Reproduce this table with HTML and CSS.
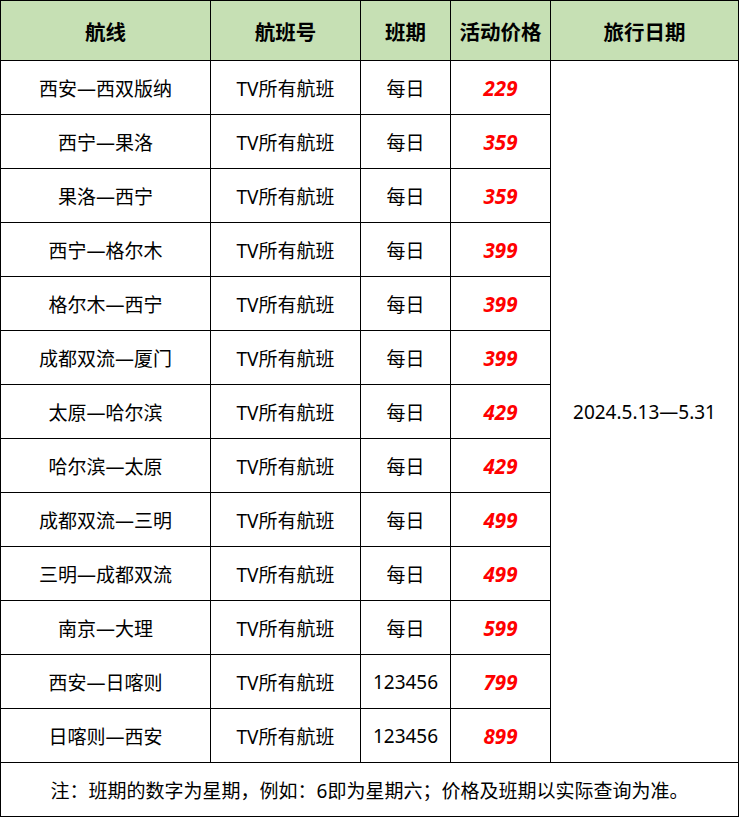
FILE: index.html
```html
<!DOCTYPE html>
<html lang="zh-CN">
<head>
<meta charset="utf-8">
<title>航线活动价格</title>
<link rel="stylesheet" href="styles.css">
</head>
<body>
<table class="fare-table">
  <colgroup>
    <col class="c-route">
    <col class="c-flight">
    <col class="c-sched">
    <col class="c-price">
    <col class="c-date">
  </colgroup>
  <thead>
    <tr class="head-row">
      <th>航线</th>
      <th>航班号</th>
      <th>班期</th>
      <th>活动价格</th>
      <th>旅行日期</th>
    </tr>
  </thead>
  <tbody>
    <tr><td>西安—西双版纳</td><td>TV所有航班</td><td>每日</td><td class="price">229</td><td class="date" rowspan="13">2024.5.13—5.31</td></tr>
    <tr><td>西宁—果洛</td><td>TV所有航班</td><td>每日</td><td class="price">359</td></tr>
    <tr><td>果洛—西宁</td><td>TV所有航班</td><td>每日</td><td class="price">359</td></tr>
    <tr><td>西宁—格尔木</td><td>TV所有航班</td><td>每日</td><td class="price">399</td></tr>
    <tr><td>格尔木—西宁</td><td>TV所有航班</td><td>每日</td><td class="price">399</td></tr>
    <tr><td>成都双流—厦门</td><td>TV所有航班</td><td>每日</td><td class="price">399</td></tr>
    <tr><td>太原—哈尔滨</td><td>TV所有航班</td><td>每日</td><td class="price">429</td></tr>
    <tr><td>哈尔滨—太原</td><td>TV所有航班</td><td>每日</td><td class="price">429</td></tr>
    <tr><td>成都双流—三明</td><td>TV所有航班</td><td>每日</td><td class="price">499</td></tr>
    <tr><td>三明—成都双流</td><td>TV所有航班</td><td>每日</td><td class="price">499</td></tr>
    <tr><td>南京—大理</td><td>TV所有航班</td><td>每日</td><td class="price">599</td></tr>
    <tr><td>西安—日喀则</td><td>TV所有航班</td><td>123456</td><td class="price">799</td></tr>
    <tr><td>日喀则—西安</td><td>TV所有航班</td><td>123456</td><td class="price">899</td></tr>
    <tr class="note-row"><td colspan="5">注：班期的数字为星期，例如：6即为星期六；价格及班期以实际查询为准。</td></tr>
  </tbody>
</table>
</body>
</html>
```

FILE: styles.css
```css
html, body {
  margin: 0;
  padding: 0;
  background: #ffffff;
}

.fare-table {
  border-collapse: collapse;
  table-layout: fixed;
  width: 738px;
  font-family: "Noto Sans", "Noto Sans CJK SC", sans-serif;
  color: #000000;
}

.c-route { width: 210px; }
.c-flight { width: 150px; }
.c-sched { width: 90px; }
.c-price { width: 100px; }
.c-date { width: 188px; }

.fare-table th,
.fare-table td {
  border: 1px solid #000000;
  text-align: center;
  vertical-align: middle;
  padding: 0;
}

.fare-table th {
  background: #c6e0b4;
  height: 59px;
  font-size: 20.5px;
  font-weight: bold;
}

.fare-table td {
  height: 53px;
  font-size: 19px;
  font-weight: normal;
}

.fare-table td.price {
  color: #ff0000;
  font-weight: bold;
  font-style: italic;
  font-size: 20.5px;
}

.fare-table td.date {
  font-size: 19px;
}

.note-row td {
  height: 53px;
}
```
